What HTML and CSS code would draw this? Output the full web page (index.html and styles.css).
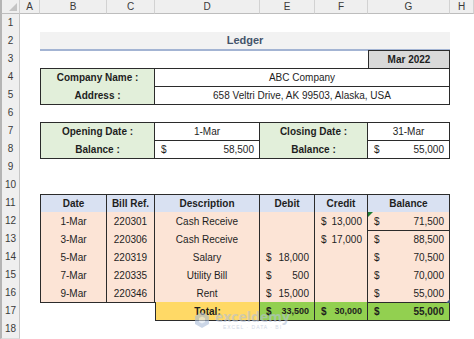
FILE: index.html
```html
<!DOCTYPE html>
<html>
<head>
    <title>Ledger</title>
    <meta charset="utf-8">
    <link rel="stylesheet" href="styles.css">
</head>
<body>
    <div class="sheet">
        <!-- column headers -->
        <div class="row hdr-row">
            <div class="corner"><span class="select-all"></span></div>
            <div class="ch">A</div>
            <div class="ch">B</div>
            <div class="ch">C</div>
            <div class="ch">D</div>
            <div class="ch">E</div>
            <div class="ch">F</div>
            <div class="ch">G</div>
            <div class="ch">H</div>
        </div>

        <div class="row"><div class="rh">1</div></div>

        <div class="row">
            <div class="rh">2</div>
            <div></div>
            <div class="title span6">Ledger</div>
        </div>

        <div class="row">
            <div class="rh">3</div>
            <div></div>
            <div class="span5"></div>
            <div class="cell month bx bl bt">Mar 2022</div>
        </div>

        <div class="row">
            <div class="rh">4</div>
            <div></div>
            <div class="cell label span2 bx bl bt">Company Name :</div>
            <div class="cell span4 bx bt">ABC Company</div>
        </div>
        <div class="row">
            <div class="rh">5</div>
            <div></div>
            <div class="cell label span2 bx bl">Address :</div>
            <div class="cell span4 bx">658 Veltri Drive, AK 99503, Alaska, USA</div>
        </div>

        <div class="row"><div class="rh">6</div></div>

        <div class="row">
            <div class="rh">7</div>
            <div></div>
            <div class="cell label span2 bx bl bt">Opening Date :</div>
            <div class="cell bx bt">1-Mar</div>
            <div class="cell label span2 bx bt">Closing Date :</div>
            <div class="cell bx bt">31-Mar</div>
        </div>
        <div class="row">
            <div class="rh">8</div>
            <div></div>
            <div class="cell label span2 bx bl">Balance :</div>
            <div class="cell acc bx"><span>$</span><span>58,500</span></div>
            <div class="cell label span2 bx">Balance :</div>
            <div class="cell acc bx"><span>$</span><span>55,000</span></div>
        </div>

        <div class="row"><div class="rh">9</div></div>
        <div class="row"><div class="rh">10</div></div>

        <div class="row">
            <div class="rh">11</div>
            <div></div>
            <div class="cell th bx bl bt">Date</div>
            <div class="cell th bx bt">Bill Ref.</div>
            <div class="cell th bx bt">Description</div>
            <div class="cell th bx bt">Debit</div>
            <div class="cell th bx bt">Credit</div>
            <div class="cell th bx bt">Balance</div>
        </div>
        <div class="row">
            <div class="rh">12</div>
            <div></div>
            <div class="cell td bx bl">1-Mar</div>
            <div class="cell td bx">220301</div>
            <div class="cell td bx">Cash Receive</div>
            <div class="cell td bx"></div>
            <div class="cell td acc bx"><span>$</span><span>13,000</span></div>
            <div class="cell td acc bx flagged"><span>$</span><span>71,500</span></div>
        </div>
        <div class="row">
            <div class="rh">13</div>
            <div></div>
            <div class="cell td bx bl">3-Mar</div>
            <div class="cell td bx">220306</div>
            <div class="cell td bx">Cash Receive</div>
            <div class="cell td bx"></div>
            <div class="cell td acc bx"><span>$</span><span>17,000</span></div>
            <div class="cell td acc bx"><span>$</span><span>88,500</span></div>
        </div>
        <div class="row">
            <div class="rh">14</div>
            <div></div>
            <div class="cell td bx bl">5-Mar</div>
            <div class="cell td bx">220319</div>
            <div class="cell td bx">Salary</div>
            <div class="cell td acc bx"><span>$</span><span>18,000</span></div>
            <div class="cell td bx"></div>
            <div class="cell td acc bx"><span>$</span><span>70,500</span></div>
        </div>
        <div class="row">
            <div class="rh">15</div>
            <div></div>
            <div class="cell td bx bl">7-Mar</div>
            <div class="cell td bx">220335</div>
            <div class="cell td bx">Utility Bill</div>
            <div class="cell td acc bx"><span>$</span><span>500</span></div>
            <div class="cell td bx"></div>
            <div class="cell td acc bx"><span>$</span><span>70,000</span></div>
        </div>
        <div class="row">
            <div class="rh">16</div>
            <div></div>
            <div class="cell td bx bl">9-Mar</div>
            <div class="cell td bx">220346</div>
            <div class="cell td bx">Rent</div>
            <div class="cell td acc bx"><span>$</span><span>15,000</span></div>
            <div class="cell td bx"></div>
            <div class="cell td acc bx handle"><span>$</span><span>55,000</span></div>
        </div>
        <div class="row">
            <div class="rh">17</div>
            <div></div>
            <div></div>
            <div></div>
            <div class="cell total bx bl">Total:</div>
            <div class="cell sum acc small bx"><span>$</span><span>33,500</span></div>
            <div class="cell sum acc small bx"><span>$</span><span>30,000</span></div>
            <div class="cell sum acc bx"><span>$</span><span>55,000</span></div>
        </div>
        <div class="row"><div class="rh">18</div></div>

        <!-- site watermark -->
        <div class="watermark">
            <svg width="16" height="18" viewBox="0 0 16 18">
                <path d="M8 1 L15 5 L15 13 L8 17 L1 13 L1 5 Z" fill="#a9bcd8"/>
                <path d="M5 7 L8 5.5 L11 7 L11 11 L8 12.5 L5 11 Z" fill="#e1e8f2"/>
            </svg>
            <div class="wm-text">
                <span class="wm-name">exceldemy</span>
                <span class="wm-tag">EXCEL · DATA · BI</span>
            </div>
        </div>
    </div>
</body>
</html>
```

FILE: styles.css
```css
body {
    margin: 0;
    background-color: white;
    font-family: "Liberation Sans", Arial, sans-serif;
    color: #1e1e1e;
    overflow: hidden;
}
.sheet {
    position: relative;
    width: 474px;
    height: 339px;
    display: flex;
    flex-direction: column;
}
.row {
    display: grid;
    grid-template-columns: 20px 20px 67px 48px 105px 55px 53px 82px 24px;
    height: 18px;
    flex: none;
}
.hdr-row {
    height: 14px;
}
.corner {
    position: relative;
    background-color: #efefef;
    border-right: 1px solid #cfcfcf;
    border-bottom: 1px solid #bdbdbd;
    border-left: 2px solid #b5b5b5;
}
.select-all {
    position: absolute;
    right: 2px;
    bottom: 2px;
    width: 0;
    height: 0;
    border-left: 8px solid transparent;
    border-bottom: 8px solid #c4c4c4;
}
.ch {
    background-color: #efefef;
    border-right: 1px solid #d2d2d2;
    border-bottom: 1px solid #bdbdbd;
    font-size: 10px;
    line-height: 13px;
    text-align: center;
    color: #3a3a3a;
}
.rh {
    background-color: #efefef;
    border-right: 1px solid #c6c6c6;
    border-bottom: 1px solid #dcdcdc;
    border-left: 2px solid #b5b5b5;
    font-size: 10px;
    line-height: 18px;
    text-align: center;
    color: #3a3a3a;
}
.span2 { grid-column: span 2; }
.span4 { grid-column: span 4; }
.span5 { grid-column: span 5; }
.span6 { grid-column: span 6; }

.cell {
    box-sizing: border-box;
    font-size: 10px;
    display: flex;
    align-items: center;
    justify-content: center;
    white-space: nowrap;
}
.bx {
    border-right: 1px solid #2b2b2b;
    border-bottom: 1px solid #2b2b2b;
}
.bl { border-left: 1px solid #2b2b2b; }
.bt { border-top: 1px solid #2b2b2b; }

.title {
    background-color: #f2f2f2;
    border-bottom: 2px solid #a3b4d3;
    box-sizing: border-box;
    font-size: 11px;
    font-weight: bold;
    color: #44546a;
    text-align: center;
    line-height: 17px;
}
.month {
    background-color: #d9d9d9;
    font-weight: bold;
}
.label {
    background-color: #e2efda;
    font-weight: bold;
}
.acc {
    justify-content: space-between;
    padding: 0 5px 0 6px;
}
.th {
    background-color: #d9e1f2;
    font-weight: bold;
}
.td {
    background-color: #fce4d6;
}
.total {
    background-color: #ffd966;
    font-weight: bold;
}
.sum {
    background-color: #92d050;
    font-weight: bold;
}
.small span:last-child {
    font-size: 9px;
}
.flagged {
    position: relative;
}
.flagged::before {
    content: "";
    position: absolute;
    left: 0;
    top: 0;
    border-top: 5px solid #1e7b34;
    border-right: 5px solid transparent;
}
.handle {
    position: relative;
}
.handle::after {
    content: "";
    position: absolute;
    right: -1px;
    bottom: -1px;
    border-bottom: 4px solid #41587a;
    border-left: 4px solid transparent;
}

.watermark {
    position: absolute;
    left: 194px;
    top: 309px;
    display: flex;
    align-items: center;
    gap: 5px;
    opacity: 0.6;
    pointer-events: none;
}
.wm-text {
    display: flex;
    flex-direction: column;
    align-items: center;
}
.wm-name {
    font-family: "Open Sans", sans-serif;
    font-size: 14px;
    font-weight: bold;
    color: #b3c1d6;
    line-height: 15px;
}
.wm-tag {
    font-size: 5px;
    letter-spacing: 1px;
    color: #b3c1d6;
}
```
